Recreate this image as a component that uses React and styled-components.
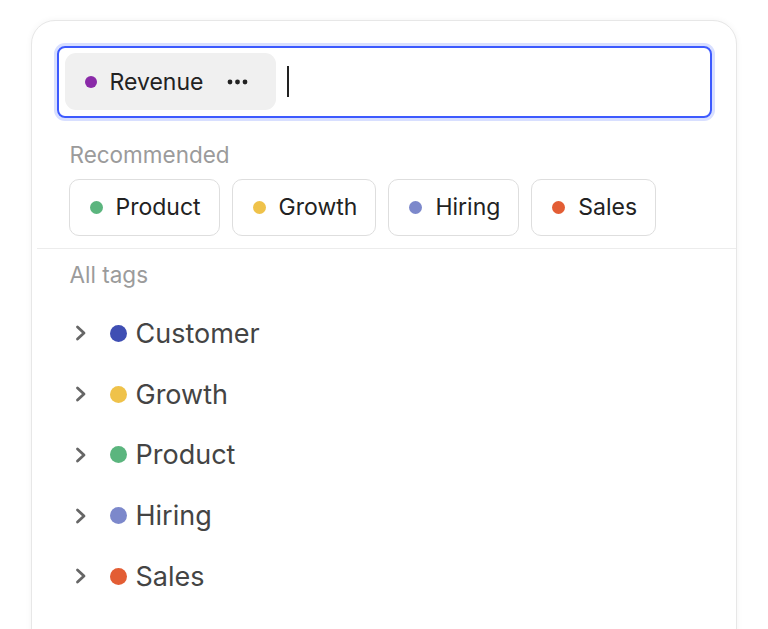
import React from "react";
import styled, { createGlobalStyle } from "styled-components";

const Global = createGlobalStyle`
  html, body { margin: 0; padding: 0; background: #ffffff; }
  body { font-family: Inter, "Noto Sans", Arial, sans-serif; overflow: hidden; }
`;

const Page = styled.div`
  height: 629px;
  padding: 20px 0 0 31px;
  box-sizing: border-box;
  overflow: hidden;
`;

const Card = styled.div`
  width: 706px;
  height: 640px;
  box-sizing: border-box;
  border: 1.5px solid #e7e7e7;
  border-radius: 24px;
  background: #fff;
  box-shadow: 0 0 6px rgba(0, 0, 0, 0.05);
`;

const Top = styled.div`
  padding: 24.5px 24px 12px 24.5px;
`;

const InputBox = styled.div`
  height: 72px;
  box-sizing: border-box;
  border: 2px solid #3d5afe;
  border-radius: 8px;
  box-shadow: 0 0 0 3px #d8dfff;
  padding: 6px;
  display: flex;
  align-items: center;
  gap: 11px;
`;

const SelectedChip = styled.div`
  height: 57px;
  box-sizing: border-box;
  background: #f0f0f0;
  border-radius: 11px;
  display: flex;
  align-items: center;
  padding: 0 28px 0 20px;
  font-size: 23px;
  color: #222;
`;

const Dot = styled.span`
  width: ${(p) => p.size}px;
  height: ${(p) => p.size}px;
  border-radius: 50%;
  background: ${(p) => p.color};
  flex: none;
  margin-right: ${(p) => p.gap}px;
`;

const More = styled.svg`
  margin-left: 24px;
  flex: none;
`;

const Caret = styled.span`
  width: 2px;
  height: 31px;
  background: #222;
`;

const Label = styled.div`
  font-size: 22.5px;
  color: #9b9b9b;
  padding-left: 13px;
  line-height: 26px;
`;

const RecLabel = styled(Label)`
  margin-top: 24px;
`;

const ChipRow = styled.div`
  display: flex;
  gap: 12px;
  margin-top: 11px;
  padding-left: 12px;
`;

const Chip = styled.div`
  height: 57px;
  box-sizing: border-box;
  border: 1.5px solid #dedede;
  border-radius: 10px;
  display: flex;
  align-items: center;
  padding: 0 18px 0 20px;
  font-size: 23px;
  color: #222;
`;

const Divider = styled.div`
  height: 1.5px;
  background: #ececec;
  margin: 0 0 0 5px;
`;

const Bottom = styled.div`
  padding: 13px 24px 0 24.5px;
`;

const List = styled.div`
  margin-top: 15px;
  display: flex;
  flex-direction: column;
`;

const Row = styled.div`
  height: 60.75px;
  display: flex;
  align-items: center;
  padding-left: 18px;
  font-size: 27px;
  color: #444;
`;

const Chevron = styled.svg`
  flex: none;
  margin-right: 23px;
`;

const recommended = [
  { name: "Product", color: "#5bb57e" },
  { name: "Growth", color: "#efc24a" },
  { name: "Hiring", color: "#7c88cb" },
  { name: "Sales", color: "#e35d34" },
];

const all = [
  { name: "Customer", color: "#3f4eb3" },
  { name: "Growth", color: "#efc24a" },
  { name: "Product", color: "#5bb57e" },
  { name: "Hiring", color: "#7c88cb" },
  { name: "Sales", color: "#e35d34" },
];

export default function App() {
  return (
    <>
      <Global />
      <Page>
        <Card>
          <Top>
            <InputBox>
              <SelectedChip>
                <Dot size={12} gap={13} color="#8a2aa8" />
                Revenue
                <More width="21" height="6" viewBox="0 0 21 6">
                  <circle cx="3" cy="3" r="2.4" fill="#222" />
                  <circle cx="10.5" cy="3" r="2.4" fill="#222" />
                  <circle cx="18" cy="3" r="2.4" fill="#222" />
                </More>
              </SelectedChip>
              <Caret />
            </InputBox>
            <RecLabel>Recommended</RecLabel>
            <ChipRow>
              {recommended.map((t) => (
                <Chip key={t.name}>
                  <Dot size={13} gap={13} color={t.color} />
                  {t.name}
                </Chip>
              ))}
            </ChipRow>
          </Top>
          <Divider />
          <Bottom>
            <Label>All tags</Label>
            <List>
              {all.map((t) => (
                <Row key={t.name}>
                  <Chevron width="12" height="18" viewBox="0 0 12 18">
                    <path d="M2.5 3 L9 9 L2.5 15" fill="none" stroke="#666" strokeWidth="2.8" strokeLinecap="round" strokeLinejoin="round" />
                  </Chevron>
                  <Dot size={17} gap={9} color={t.color} />
                  {t.name}
                </Row>
              ))}
            </List>
          </Bottom>
        </Card>
      </Page>
    </>
  );
}
